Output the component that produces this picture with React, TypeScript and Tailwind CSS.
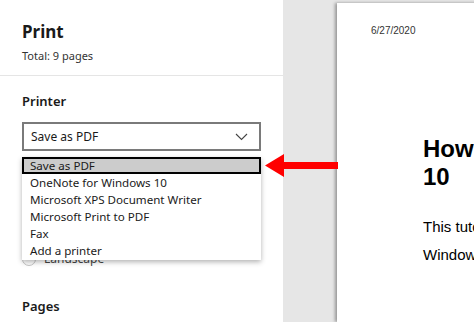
import React from 'react';

const PRINTERS = [
  'Save as PDF',
  'OneNote for Windows 10',
  'Microsoft XPS Document Writer',
  'Microsoft Print to PDF',
  'Fax',
  'Add a printer',
];

const ChevronDown = () => (
  <svg width="13" height="8" viewBox="0 0 13 8" fill="none" className="text-[#444]">
    <path d="M1 1l5.5 5.5L12 1" stroke="currentColor" strokeWidth="1.1" />
  </svg>
);

const App: React.FC = () => {
  return (
    <div className="w-[474px] h-[322px] flex overflow-hidden bg-white font-['Noto_Sans',sans-serif] text-[#1a1a1a]">
      {/* settings panel */}
      <div className="relative w-[283px] shrink-0 bg-white">
        <div className="px-[22px] pt-[21px] pb-[12px] border-b border-[#e5e5e5]">
          <h1 className="text-[17px] leading-[22px] font-bold">Print</h1>
          <p className="mt-[6px] text-[11px] leading-[14px] text-[#333]">Total: 9 pages</p>
        </div>

        <div className="px-[22px] pt-[16px]">
          <h2 className="text-[13px] leading-[18px] font-semibold">Printer</h2>
          <div className="mt-[12px] h-[29px] flex items-center justify-between px-[7px] border-2 border-[#7a7a7a] bg-white">
            <span className="text-[12px]">Save as PDF</span>
            <span className="pr-[4px]"><ChevronDown /></span>
          </div>

          <h2 className="mt-[36px] text-[13px] leading-[18px] font-semibold">Layout</h2>
          <div className="mt-[10px] flex flex-col gap-[17px]">
            <label className="flex items-center gap-[8px] text-[12px] leading-[18px]">
              <span className="w-[14px] h-[14px] rounded-full border border-[#555]" />
              Portrait
            </label>
            <label className="flex items-center gap-[8px] text-[12px] leading-[18px] text-[#444]">
              <span className="w-[14px] h-[14px] rounded-full border border-[#c4c4c4]" />
              Landscape
            </label>
          </div>

          <h2 className="mt-[29px] text-[13px] leading-[18px] font-semibold">Pages</h2>
        </div>

        {/* open dropdown */}
        <ul className="absolute left-[22px] top-[157px] w-[239px] bg-white shadow-[0_2px_5px_rgba(0,0,0,0.3)] text-[11.6px] leading-[17px] pb-[1px]">
          {PRINTERS.map((p, i) => (
            <li
              key={p}
              className={
                i === 0
                  ? 'h-[17px] px-[6px] bg-[#cccccc] border-2 border-black flex items-center'
                  : 'h-[17px] px-[8px] flex items-center'
              }
            >
              {p}
            </li>
          ))}
        </ul>
      </div>

      {/* preview area */}
      <div className="relative flex-1 bg-[#e6e6e6] pl-[54px] pt-[3px]">
        <div className="h-full bg-white shadow-[-2px_0_3px_rgba(0,0,0,0.35)] pl-[34px] pt-[22px] font-['Liberation_Sans',Arial,sans-serif] text-black whitespace-nowrap overflow-hidden">
          <p className="text-[10px] leading-[12px] text-[#333]">6/27/2020</p>
          <h3 className="mt-[98px] ml-[52px] text-[24px] leading-[28px] font-bold">How to Save as PDF in Windows<br />10</h3>
          <p className="mt-[22px] ml-[52px] text-[15px] leading-[28px]">This tutorial will show you<br />Windows 10</p>
        </div>
      </div>

      {/* red pointer arrow */}
      <svg className="absolute left-[264px] top-[153px]" width="75" height="25" viewBox="0 0 75 25">
        <path d="M1 12.5L20 1v8h54v7H20v8z" fill="#ff0000" />
      </svg>
    </div>
  );
};

export default App;
